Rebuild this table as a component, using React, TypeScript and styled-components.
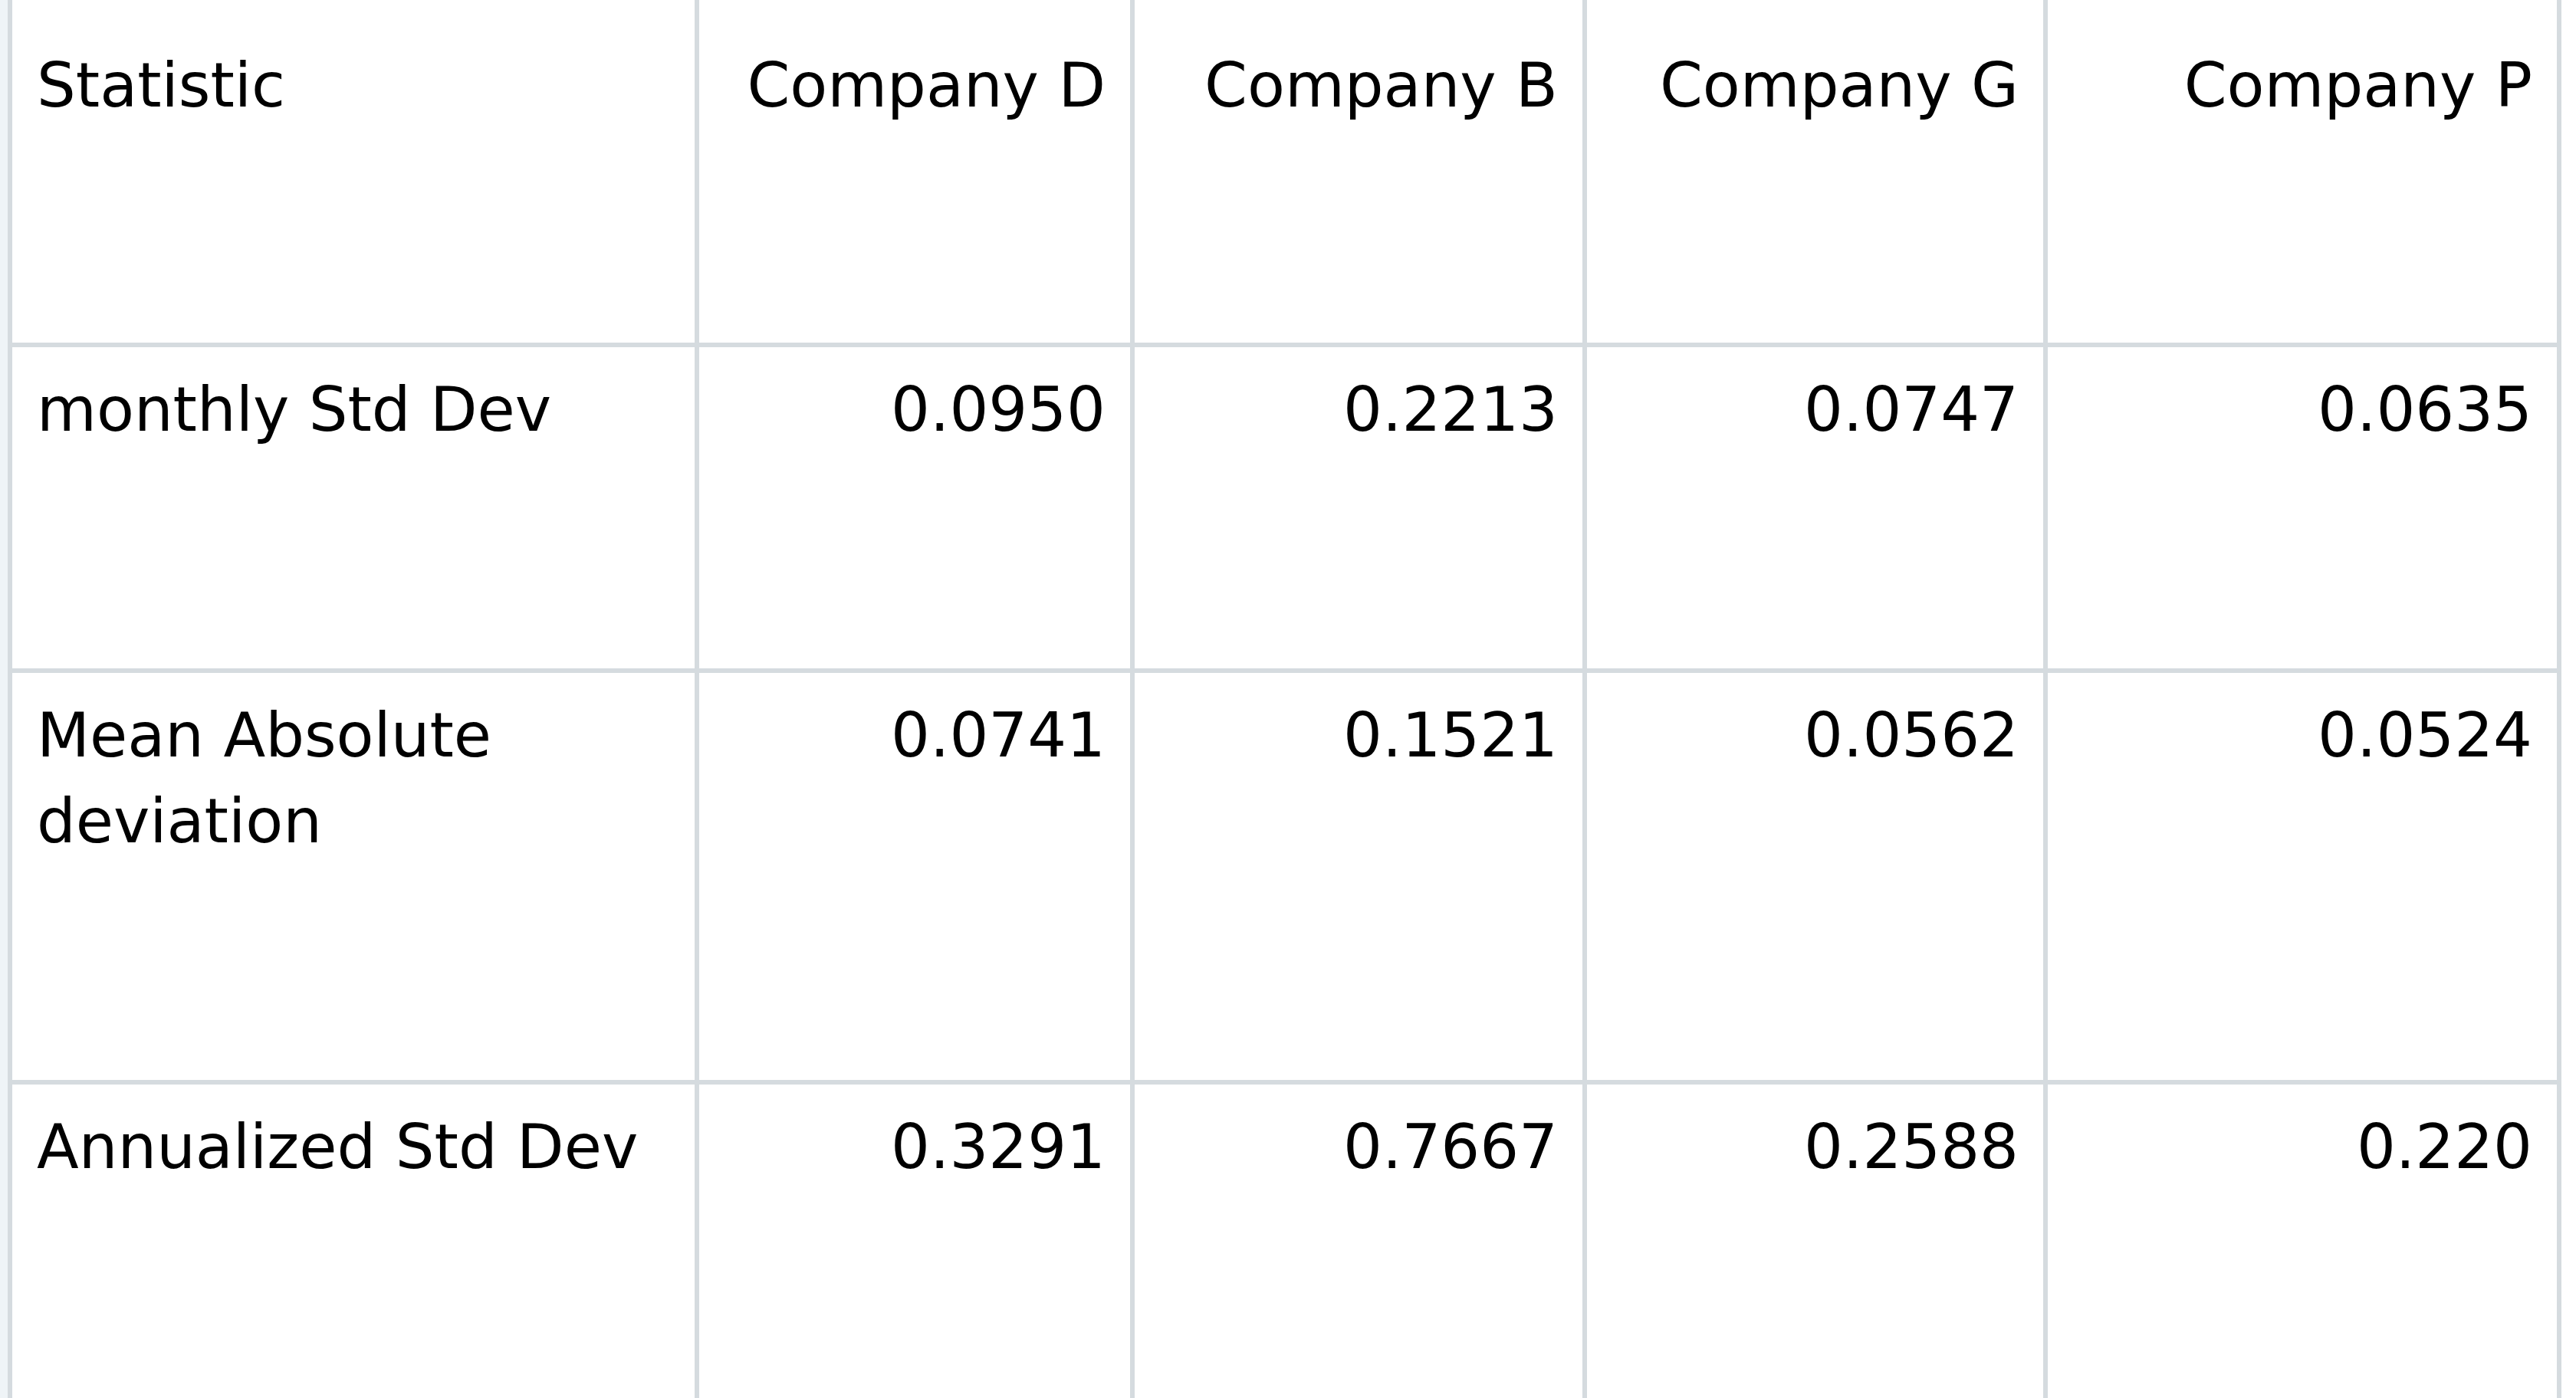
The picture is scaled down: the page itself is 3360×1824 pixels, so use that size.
import React from "react";
import styled, { createGlobalStyle } from "styled-components";

const GlobalStyle = createGlobalStyle`
  html, body {
    margin: 0;
    padding: 0;
    background: #ffffff;
    overflow: hidden;
  }
  body {
    font-family: "DejaVu Sans", Verdana, sans-serif;
    color: #000000;
  }
`;

const Page = styled.div`
  display: flex;
  align-items: stretch;
  width: 3360px;
  height: 1824px;
  overflow: hidden;
`;

const Gutter = styled.div`
  flex: 0 0 10px;
  background: #eff4f7;
`;

const Grid = styled.div`
  display: grid;
  grid-template-columns: 890px 562px 584px 595px 664px;
  column-gap: 6px;
  row-gap: 6px;
  padding: 0 6px 6px;
  background: #d5dbdf;
  align-self: flex-start;
`;

const Cell = styled.div<{ $header?: boolean; $align?: "left" | "right" }>`
  background: #ffffff;
  font-size: 80px;
  line-height: 112px;
  text-align: ${(p) => p.$align || "right"};
  padding: ${(p) => (p.$header ? "56px 32px 279px" : "26px 32px 281px")};
`;

const companies = ["Company D", "Company B", "Company G", "Company P"];

const rows: { label: string; values: string[] }[] = [
  { label: "monthly Std Dev", values: ["0.0950", "0.2213", "0.0747", "0.0635"] },
  { label: "Mean Absolute deviation", values: ["0.0741", "0.1521", "0.0562", "0.0524"] },
  { label: "Annualized Std Dev", values: ["0.3291", "0.7667", "0.2588", "0.220"] },
];

export default function App() {
  return (
    <>
      <GlobalStyle />
      <Page>
        <Gutter />
        <Grid>
          <Cell $header $align="left">Statistic</Cell>
          {companies.map((c) => (
            <Cell key={c} $header>
              {c}
            </Cell>
          ))}
          {rows.map((r) => (
            <React.Fragment key={r.label}>
              <Cell $align="left">{r.label}</Cell>
              {r.values.map((v, i) => (
                <Cell key={i}>{v}</Cell>
              ))}
            </React.Fragment>
          ))}
        </Grid>
      </Page>
    </>
  );
}
